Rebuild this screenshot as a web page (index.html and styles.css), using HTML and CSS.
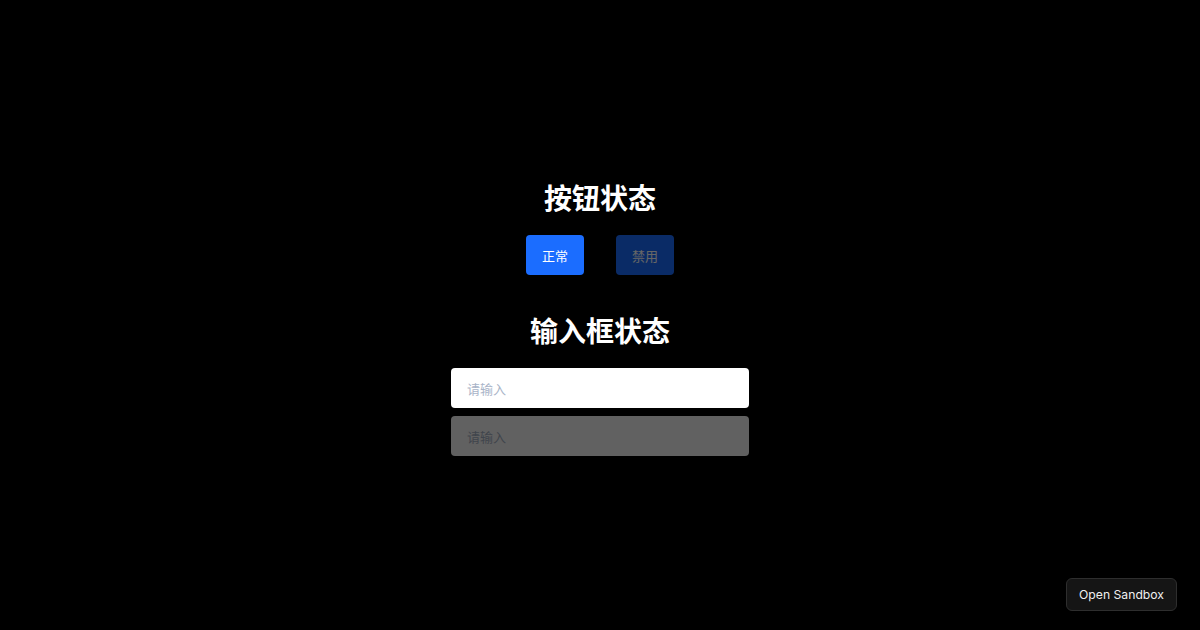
FILE: index.html
```html
<!DOCTYPE html>
<html lang="zh-CN">
<head>
<meta charset="utf-8">
<title>按钮状态</title>
<link rel="stylesheet" href="styles.css">
</head>
<body>
<main class="page">
  <section class="group">
    <h1 class="title">按钮状态</h1>
    <div class="btn-row">
      <button class="btn">正常</button>
      <button class="btn" disabled>禁用</button>
    </div>
  </section>
  <section class="group group-inputs">
    <h1 class="title">输入框状态</h1>
    <div class="input-col">
      <input class="field" type="text" placeholder="请输入">
      <input class="field" type="text" placeholder="请输入" disabled>
    </div>
  </section>
</main>
<a class="sandbox-btn" href="#">Open Sandbox</a>
</body>
</html>
```

FILE: styles.css
```css
html, body {
  margin: 0;
  padding: 0;
  background: #000;
  height: 100%;
}
body {
  font-family: "Noto Sans", "Noto Sans CJK SC", sans-serif;
}
.page {
  height: 100%;
  display: flex;
  flex-direction: column;
  align-items: center;
  justify-content: center;
  padding-top: 6px;
  box-sizing: border-box;
}
.group {
  display: flex;
  flex-direction: column;
  align-items: center;
}
.group-inputs {
  margin-top: 38px;
}
.title {
  margin: 0 0 21px;
  color: #fff;
  font-size: 28px;
  line-height: 34px;
  font-weight: 700;
  font-family: "Noto Sans CJK SC", sans-serif;
}
.btn-row {
  display: flex;
  gap: 32px;
}
.btn {
  height: 40px;
  padding: 0 16px;
  border: none;
  border-radius: 4px;
  background: #1b6dff;
  color: #fff;
  font-size: 13px;
  font-family: "Noto Sans CJK SC", sans-serif;
  cursor: pointer;
}
.btn:disabled {
  opacity: 0.4;
  cursor: not-allowed;
}
.input-col {
  display: flex;
  flex-direction: column;
  gap: 8px;
}
.field {
  width: 298px;
  height: 40px;
  box-sizing: border-box;
  padding: 0 16px;
  border: none;
  border-radius: 4px;
  background: #fff;
  font-size: 13px;
  font-family: "Noto Sans CJK SC", sans-serif;
  color: #333;
  outline: none;
}
.field::placeholder {
  color: #a9b4c8;
}
.field:disabled {
  opacity: 0.38;
}
.sandbox-btn {
  position: fixed;
  right: 23px;
  bottom: 19px;
  height: 33px;
  box-sizing: border-box;
  padding: 0 12px;
  display: flex;
  align-items: center;
  background: #151515;
  border: 1px solid #2e2e2e;
  border-radius: 6px;
  color: #f0f0f0;
  font-family: Inter, "Liberation Sans", sans-serif;
  font-size: 12.2px;
  text-decoration: none;
}
```
